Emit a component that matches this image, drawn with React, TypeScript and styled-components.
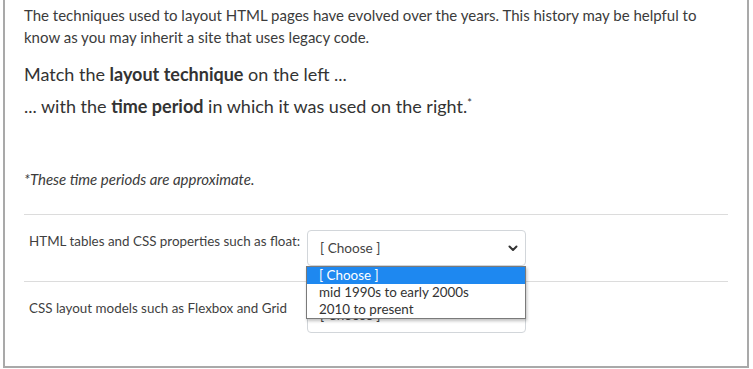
import React from "react";
import styled, { createGlobalStyle } from "styled-components";

const Global = createGlobalStyle`
  html, body { margin: 0; padding: 0; background: #fff; }
  body { font-family: Lato, "Open Sans", sans-serif; color: #3b3b3b; }
`;

const Frame = styled.div`
  box-sizing: border-box;
  margin: 0 4px 0 3px;
  height: 368px;
  border: 2px solid #a9a9a9;
  border-top: none;
  padding: 4px 19px 0 19px;
`;

const Intro = styled.p`
  margin: 0;
  font-size: 15px;
  line-height: 22px;
`;

const Lead = styled.p<{ $first?: boolean }>`
  margin: ${(p) => (p.$first ? "10px" : "0")} 0 0;
  font-size: 18px;
  line-height: 32px;
  color: #333;
  strong { font-weight: 700; }
`;

const Sup = styled.span`
  font-size: 11px;
  line-height: 0;
  position: relative;
  top: -6px;
`;

const Note = styled.p`
  margin: 46px 0 0;
  font-size: 15px;
  line-height: 22px;
  font-style: italic;
`;

const Rows = styled.div`
  margin-top: 24px;
`;

const Row = styled.div`
  display: grid;
  grid-template-columns: 283px 219px;
  align-items: start;
  border-top: 1px solid #dcdcdc;
  padding: 15px 0;
`;

const Label = styled.div`
  padding: 1px 0 0 5px;
  font-size: 13.4px;
  line-height: 20px;
  color: #3f3f3f;
`;

const SelectWrap = styled.div`
  position: relative;
`;

const SelectBox = styled.div`
  box-sizing: border-box;
  height: 36px;
  border: 1px solid #d2d6da;
  border-radius: 4px;
  background: #fff;
  display: flex;
  align-items: center;
  justify-content: space-between;
  padding: 0 6px 0 12px;
  font-size: 13.6px;
  color: #444;
`;

const Chevron = () => (
  <svg width="12" height="12" viewBox="0 0 24 24" fill="none" stroke="#333" strokeWidth="4" strokeLinecap="round" strokeLinejoin="round">
    <path d="M5 9l7 7 7-7" />
  </svg>
);

const List = styled.ul`
  position: absolute;
  top: 36px;
  left: -1px;
  width: 220px;
  margin: 0;
  padding: 0;
  list-style: none;
  box-sizing: border-box;
  background: #fff;
  border: 1px solid #7a7a7a;
  box-shadow: 1px 2px 3px rgba(0, 0, 0, 0.25);
  z-index: 2;
`;

const Option = styled.li<{ $active?: boolean }>`
  height: 17px;
  line-height: 17px;
  padding-left: 12px;
  font-size: 13.4px;
  background: ${(p) => (p.$active ? "#1e88f0" : "transparent")};
  color: ${(p) => (p.$active ? "#fff" : "#333")};
`;

const options = ["[ Choose ]", "mid 1990s to early 2000s", "2010 to present"];

export default function App() {
  return (
    <>
      <Global />
      <Frame>
        <Intro>
          The techniques used to layout HTML pages have evolved over the years. This history may be helpful to
          know as you may inherit a site that uses legacy code.
        </Intro>
        <Lead $first>
          Match the <strong>layout technique</strong> on the left ...
        </Lead>
        <Lead>
          ... with the <strong>time period</strong> in which it was used on the right.<Sup>*</Sup>
        </Lead>
        <Note>*These time periods are approximate.</Note>
        <Rows>
          <Row>
            <Label>HTML tables and CSS properties such as float:</Label>
            <SelectWrap>
              <SelectBox>
                <span>[ Choose ]</span>
                <Chevron />
              </SelectBox>
              <List>
                {options.map((o, i) => (
                  <Option key={o} $active={i === 0}>
                    {o}
                  </Option>
                ))}
              </List>
            </SelectWrap>
          </Row>
          <Row>
            <Label>CSS layout models such as Flexbox and Grid</Label>
            <SelectWrap>
              <SelectBox>
                <span>[ Choose ]</span>
                <Chevron />
              </SelectBox>
            </SelectWrap>
          </Row>
        </Rows>
      </Frame>
    </>
  );
}
